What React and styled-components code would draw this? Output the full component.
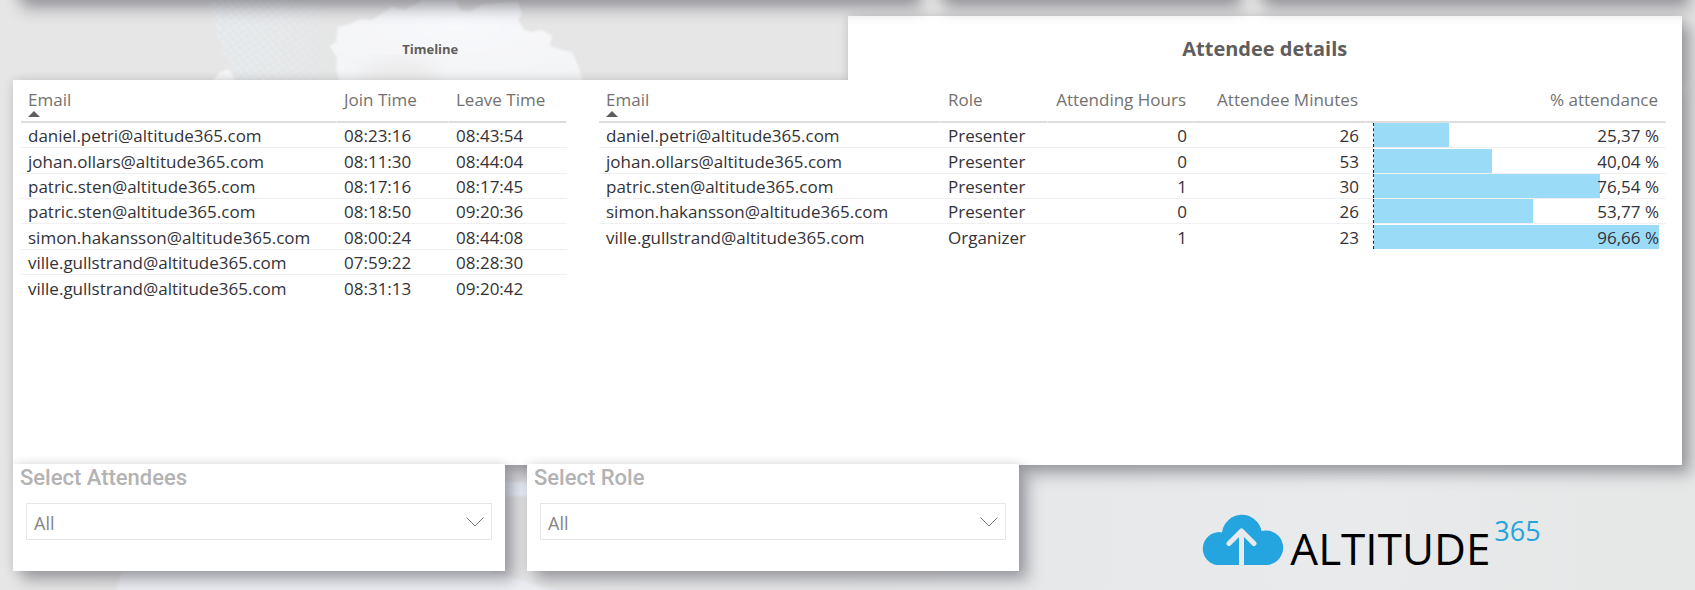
import React from "react";
import styled, { createGlobalStyle } from "styled-components";

const timeline = [
  ["daniel.petri@altitude365.com", "08:23:16", "08:43:54"],
  ["johan.ollars@altitude365.com", "08:11:30", "08:44:04"],
  ["patric.sten@altitude365.com", "08:17:16", "08:17:45"],
  ["patric.sten@altitude365.com", "08:18:50", "09:20:36"],
  ["simon.hakansson@altitude365.com", "08:00:24", "08:44:08"],
  ["ville.gullstrand@altitude365.com", "07:59:22", "08:28:30"],
  ["ville.gullstrand@altitude365.com", "08:31:13", "09:20:42"],
];

const attendees = [
  { email: "daniel.petri@altitude365.com", role: "Presenter", hours: 0, minutes: 26, pct: 25.37 },
  { email: "johan.ollars@altitude365.com", role: "Presenter", hours: 0, minutes: 53, pct: 40.04 },
  { email: "patric.sten@altitude365.com", role: "Presenter", hours: 1, minutes: 30, pct: 76.54 },
  { email: "simon.hakansson@altitude365.com", role: "Presenter", hours: 0, minutes: 26, pct: 53.77 },
  { email: "ville.gullstrand@altitude365.com", role: "Organizer", hours: 1, minutes: 23, pct: 96.66 },
];
const maxPct = Math.max(...attendees.map((a) => a.pct));
const formatPct = (n) => n.toFixed(2).replace(".", ",") + " %";

const Global = createGlobalStyle`
  * { box-sizing: border-box; }
  body {
    margin: 0;
    background: #e6e6e6;
    font-family: "Open Sans", "Noto Sans", sans-serif;
    color: #333238;
  }
`;

const cardShadow = "9px 9px 14px rgba(70, 70, 80, 0.42), 0 0 10px rgba(0, 0, 0, 0.12)";

const Report = styled.main`
  position: relative;
  isolation: isolate;
  overflow: hidden;
  min-height: 100vh;
  padding: 0 13px 19px;
`;

const Backdrop = styled.svg`
  position: absolute;
  left: 0;
  top: 0;
  z-index: -1;
`;

const UpperCards = styled.div`
  position: relative;
  z-index: 3;
  display: grid;
  grid-template-columns: 900fr 298fr 427fr;
  gap: 22px;
  height: 60px;
  margin-top: -60px;
`;

const UpperCard = styled.div`
  background: #fff;
  box-shadow: ${cardShadow};
`;

const Titles = styled.div`
  display: grid;
  grid-template-columns: 1fr 1fr;
  padding-top: 16px;
`;

const TimelineTitle = styled.h2`
  margin: 0;
  padding-top: 2px;
  font-size: 13px;
  line-height: 62px;
  font-weight: 700;
  text-align: center;
  color: #605e5c;
`;

const DetailsTitle = styled(TimelineTitle)`
  position: relative;
  z-index: 1;
  font-size: 20px;
  background: #fff;
  box-shadow: ${cardShadow};
`;

const Tables = styled.div`
  display: grid;
  grid-template-columns: 578fr 1091fr;
  min-height: 385px;
  background: #fff;
  box-shadow: ${cardShadow};
`;

const Pane = styled.section`
  padding: 0 24px 0 8px;
`;

const FrontPane = styled(Pane)`
  position: relative;
  z-index: 2;
  padding-right: 16px;
  background: #fff;
`;

const Table = styled.table`
  width: 100%;
  table-layout: fixed;
  border-collapse: separate;
  border-spacing: 0;
  font-size: 17px;
  line-height: 22px;
`;

const Col = styled.col`
  width: ${(p) => p.$w};
`;

const Th = styled.th`
  height: 43px;
  padding: 9px 7px 0;
  border-bottom: 2px solid #dedede;
  border-right: 1px solid #fff;
  font-weight: 400;
  text-align: ${(p) => (p.$num ? "right" : "left")};
  vertical-align: top;
  white-space: nowrap;
  color: #737170;
`;

const SortMark = styled.span`
  display: block;
  width: 0;
  border: 6px solid transparent;
  border-top: 0;
  border-bottom-color: #605e5c;
`;

const Row = styled.tr`
  height: 25px;
  &:nth-child(5n + 2),
  &:nth-child(5n) {
    height: 26px;
  }
  &:not(:last-child) td {
    border-bottom: 1px solid #f0f0f0;
  }
`;

const Td = styled.td`
  padding: 2px 7px 0;
  text-align: ${(p) => (p.$num ? "right" : "left")};
  white-space: nowrap;
`;

const BarTd = styled(Td)`
  padding-top: 0;
`;

const BarTrack = styled.div`
  height: 24px;
  border-left: 1px dashed #252423;
`;

const Bar = styled.div`
  height: 24px;
  background: #9adbf7;
`;

const BarLabel = styled.span`
  float: right;
  padding-top: 2px;
`;

const Footer = styled.div`
  display: grid;
  grid-template-columns: 492fr 492fr 641fr;
  gap: 22px;
  margin-top: -1px;
`;

const Slicer = styled.label`
  position: relative;
  z-index: 1;
  display: block;
  padding: 0 13px 31px;
  background: #fff;
  box-shadow: ${cardShadow};
`;

const FrontSlicer = styled(Slicer)`
  z-index: 2;
`;

const SlicerTitle = styled.span`
  display: block;
  margin: 0 -6px 12px;
  font: 500 22px/27px Roboto, sans-serif;
  color: #b3b3b3;
`;

const SelectWrap = styled.span`
  display: grid;
  align-items: center;
  grid-template-columns: 1fr 26px;
`;

const Select = styled.select`
  grid-area: 1 / 1 / 2 / 3;
  height: 37px;
  padding: 2px 7px 0;
  border: 1px solid #e6e6e6;
  border-radius: 0;
  appearance: none;
  background: #fff;
  font: 400 18px "Open Sans", sans-serif;
  color: #858585;
`;

const Chevron = styled.svg`
  grid-area: 1 / 2;
  pointer-events: none;
`;

const Brand = styled.div`
  display: flex;
  align-items: flex-end;
  justify-content: center;
  align-self: start;
  padding: 50px 0 0 18px;
`;

const BrandName = styled.span`
  margin-left: 6px;
  font-size: 44px;
  line-height: 36px;
  color: #000;
`;

const BrandNumber = styled.span`
  align-self: flex-start;
  margin-left: 4px;
  font-size: 27px;
  line-height: 34px;
  color: #25a5e0;
`;

function Scenery() {
  return (
    <Backdrop width="1695" height="590" aria-hidden="true">
      <defs>
        <pattern id="mesh" width="9" height="8" patternUnits="userSpaceOnUse" patternTransform="rotate(8)">
          <circle cx="2" cy="2" r="2" fill="#e6f0f7" />
          <circle cx="6" cy="6" r="2" fill="#e6f0f7" />
        </pattern>
        <linearGradient id="fade" x1="0" x2="1" y1="0" y2="0">
          <stop offset="0" stopColor="#fff" />
          <stop offset="0.55" stopColor="#fff" stopOpacity="0.8" />
          <stop offset="1" stopColor="#fff" stopOpacity="0" />
        </linearGradient>
        <mask id="meshMask">
          <rect x="200" y="0" width="145" height="80" fill="url(#fade)" />
        </mask>
        <linearGradient id="floor" x1="0" x2="1" y1="0" y2="0">
          <stop offset="0" stopColor="#e6e6e6" />
          <stop offset="0.5" stopColor="#e6e7e8" />
          <stop offset="0.8" stopColor="#e8eaeb" />
          <stop offset="1" stopColor="#e6e7e7" />
        </linearGradient>
        <radialGradient id="puff" cx="0.5" cy="0.3" r="0.75">
          <stop offset="0" stopColor="#f8f9fb" />
          <stop offset="1" stopColor="#f3f4f6" />
        </radialGradient>
        <filter id="soft">
          <feGaussianBlur stdDeviation="1" />
        </filter>
        <filter id="softer">
          <feGaussianBlur stdDeviation="9" />
        </filter>
      </defs>
      <rect y="460" width="1695" height="130" fill="url(#floor)" />
      <path d="M209 0H318L345 80H236L218 40Z" fill="url(#mesh)" filter="url(#soft)" mask="url(#meshMask)" />
      <path
        d="M338 27L350 24 360 19 372 20 384 12 392 7 404 10 415 5 422 0 456 0 460 10 470 12 482 5 500 3 518 2 522 14 518 20 524 30 532 32 542 30 552 36 550 46 562 50 572 52 578 66 584 84H340L336 70 337 58 330 46 336 42Z"
        fill="url(#puff)"
        filter="url(#soft)"
      />
      <ellipse cx="400" cy="76" rx="40" ry="18" fill="#ececed" filter="url(#softer)" />
      <path d="M212 82L220 72 229 69 236 80Z" fill="#f5f6f8" filter="url(#soft)" />
      <path d="M123 568L115 592H560L480 568Z" fill="#eeeff3" filter="url(#soft)" />
      <path d="M500 482H532V496H500Z" fill="#eef3fa" filter="url(#soft)" />
    </Backdrop>
  );
}

function SlicerField({ box: Box, title }) {
  return (
    <Box>
      <SlicerTitle>{title}</SlicerTitle>
      <SelectWrap>
        <Select defaultValue="All">
          <option>All</option>
        </Select>
        <Chevron width="18" height="10" viewBox="0 0 18 10" fill="none" stroke="#777">
          <path d="M.5 .5L9 9 17.5 .5" />
        </Chevron>
      </SelectWrap>
    </Box>
  );
}

export default function App() {
  return (
    <Report>
      <Global />
      <Scenery />
      <UpperCards>
        <UpperCard />
        <UpperCard />
        <UpperCard />
      </UpperCards>
      <Titles>
        <TimelineTitle>Timeline</TimelineTitle>
        <DetailsTitle>Attendee details</DetailsTitle>
      </Titles>
      <Tables>
        <Pane>
          <Table>
            <colgroup>
              <Col $w="316px" />
              <Col $w="112px" />
              <Col $w="auto" />
            </colgroup>
            <thead>
              <tr>
                <Th aria-sort="ascending">
                  Email
                  <SortMark />
                </Th>
                <Th>Join Time</Th>
                <Th>Leave Time</Th>
              </tr>
            </thead>
            <tbody>
              {timeline.map(([email, join, leave]) => (
                <Row key={email + join}>
                  <Td>{email}</Td>
                  <Td>{join}</Td>
                  <Td>{leave}</Td>
                </Row>
              ))}
            </tbody>
          </Table>
        </Pane>
        <FrontPane>
          <Table>
            <colgroup>
              <Col $w="auto" />
              <Col $w="107px" />
              <Col $w="146px" />
              <Col $w="172px" />
              <Col $w="300px" />
            </colgroup>
            <thead>
              <tr>
                <Th aria-sort="ascending">
                  Email
                  <SortMark />
                </Th>
                <Th>Role</Th>
                <Th $num>Attending Hours</Th>
                <Th $num>Attendee Minutes</Th>
                <Th $num>% attendance</Th>
              </tr>
            </thead>
            <tbody>
              {attendees.map((a) => (
                <Row key={a.email}>
                  <Td>{a.email}</Td>
                  <Td>{a.role}</Td>
                  <Td $num>{a.hours}</Td>
                  <Td $num>{a.minutes}</Td>
                  <BarTd $num>
                    <BarTrack>
                      <BarLabel>{formatPct(a.pct)}</BarLabel>
                      <Bar style={{ width: `${(a.pct / maxPct) * 100}%` }} />
                    </BarTrack>
                  </BarTd>
                </Row>
              ))}
            </tbody>
          </Table>
        </FrontPane>
      </Tables>
      <Footer>
        <SlicerField box={Slicer} title="Select Attendees" />
        <SlicerField box={FrontSlicer} title="Select Role" />
        <Brand>
          <svg width="84" height="52" viewBox="0 0 84 52" aria-hidden="true">
            <path
              d="M17 51A16.500 16.500 0 0 1 16 18.500Q19 17.500 22 18.500A20 20 0 0 1 61.500 17A17.300 17.300 0 1 1 67 51Z"
              fill="#25a5e0"
            />
            <path d="M41.500 50V17M29 29.500L41.500 17 54 29.500" fill="none" stroke="#e8eaeb" strokeWidth="5" strokeLinecap="round" strokeLinejoin="round" />
          </svg>
          <BrandName>ALTITUDE</BrandName>
          <BrandNumber>365</BrandNumber>
        </Brand>
      </Footer>
    </Report>
  );
}
